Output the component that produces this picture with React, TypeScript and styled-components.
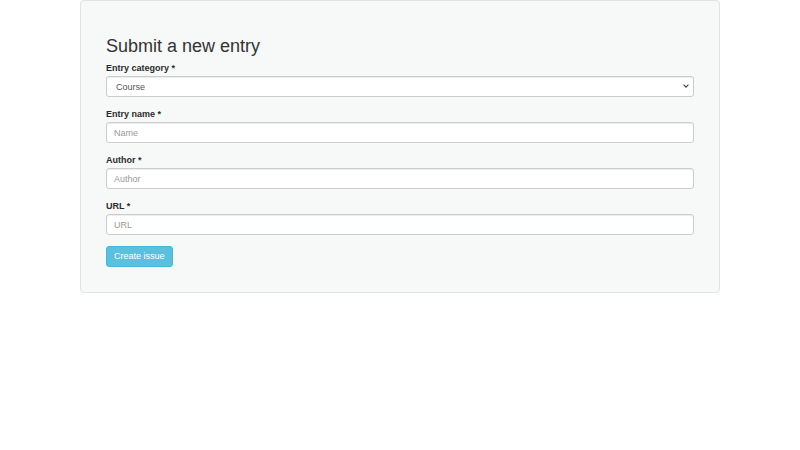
import React from "react";
import styled, { createGlobalStyle } from "styled-components";

const GlobalStyle = createGlobalStyle`
  html, body {
    margin: 0;
    padding: 0;
    background: #fff;
    font-family: "Liberation Sans", Arial, sans-serif;
    color: #333;
  }
  * {
    box-sizing: border-box;
  }
`;

const Container = styled.div`
  width: 640px;
  margin: 0 auto;
`;

const Well = styled.div`
  background: #f7f8f8;
  border: 1px solid #e1e3e3;
  border-radius: 4px;
  padding: 25px;
`;

const Heading = styled.h3`
  margin: 10px 0 5px;
  font-size: 18px;
  line-height: 20px;
  font-weight: 400;
  color: #333;
`;

const Group = styled.div`
  margin-bottom: 10px;
`;

const Label = styled.label`
  display: block;
  font-size: 9px;
  line-height: 14px;
  font-weight: 700;
  color: #2b2b2b;
  margin-bottom: 1px;
`;

const fieldStyle = `
  display: block;
  width: 100%;
  height: 21px;
  border: 1px solid #ccc;
  border-radius: 3px;
  background: #fff;
  font-family: "Liberation Sans", Arial, sans-serif;
  font-size: 9px;
  color: #555;
  box-shadow: inset 0 1px 1px rgba(0, 0, 0, 0.075);
  outline: none;
`;

const Input = styled.input`
  ${fieldStyle}
  padding: 0 7px;
  &::placeholder {
    color: #999;
  }
`;

const SelectWrap = styled.div`
  position: relative;
`;

const Select = styled.select`
  ${fieldStyle}
  appearance: none;
  -webkit-appearance: none;
  padding: 0 9px;
`;

const Chevron = styled.svg`
  position: absolute;
  right: 5px;
  top: 8px;
  pointer-events: none;
`;

const SubmitButton = styled.button`
  display: inline-block;
  height: 21px;
  padding: 0 7px;
  border: 1px solid #46b8da;
  border-radius: 3px;
  background: #5bc0de;
  color: #fff;
  font-family: "Liberation Sans", Arial, sans-serif;
  font-size: 9px;
  cursor: pointer;
`;

const fields = [
  { id: "name", label: "Entry name *", placeholder: "Name" },
  { id: "author", label: "Author *", placeholder: "Author" },
  { id: "url", label: "URL *", placeholder: "URL" },
];

export default function App() {
  return (
    <>
      <GlobalStyle />
      <Container>
        <Well>
          <form onSubmit={(e) => e.preventDefault()}>
            <Heading>Submit a new entry</Heading>
            <Group>
              <Label htmlFor="category">Entry category *</Label>
              <SelectWrap>
                <Select id="category" defaultValue="course">
                  <option value="course">Course</option>
                  <option value="book">Book</option>
                  <option value="article">Article</option>
                </Select>
                <Chevron width="6" height="4" viewBox="0 0 6 4">
                  <path d="M0.6 0.6 L3 3.2 L5.4 0.6" fill="none" stroke="#444" strokeWidth="1.1" />
                </Chevron>
              </SelectWrap>
            </Group>
            {fields.map((f) => (
              <Group key={f.id}>
                <Label htmlFor={f.id}>{f.label}</Label>
                <Input id={f.id} placeholder={f.placeholder} />
              </Group>
            ))}
            <SubmitButton type="submit">Create issue</SubmitButton>
          </form>
        </Well>
      </Container>
    </>
  );
}
